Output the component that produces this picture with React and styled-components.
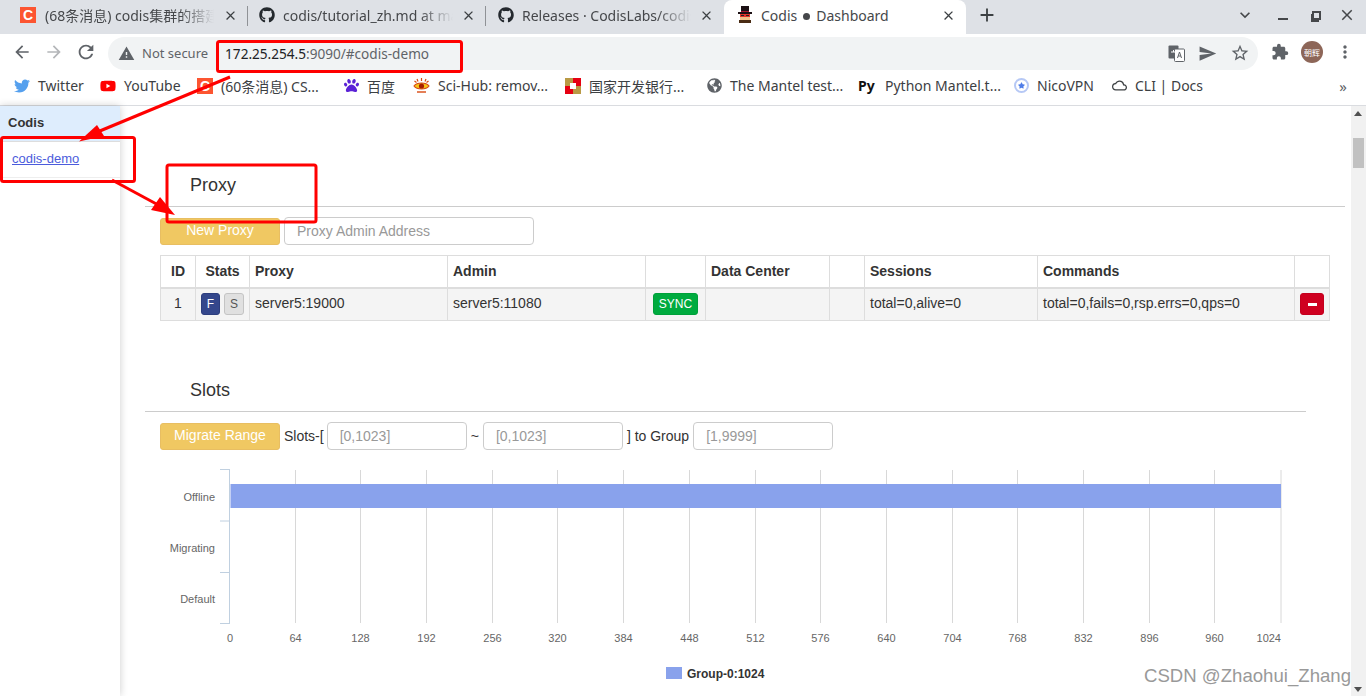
import React from "react";
import styled, { createGlobalStyle } from "styled-components";
import { FaGithub, FaTwitter, FaYoutube, FaPaw, FaGlobeAmericas, FaStar } from "react-icons/fa";
import {
  MdArrowBack,
  MdArrowForward,
  MdRefresh,
  MdWarning,
  MdSend,
  MdStarBorder,
  MdExtension,
  MdMoreVert,
  MdClose,
  MdAdd,
  MdKeyboardArrowDown,
  MdOutlineCloud
} from "react-icons/md";

const GlobalStyle = createGlobalStyle`
  html, body {
    margin: 0;
    padding: 0;
    height: 696px;
    overflow: hidden;
    background: #fff;
  }
  * {
    box-sizing: border-box;
  }
`;

const chromeFont = `"Noto Sans", "Noto Sans CJK SC", sans-serif`;
const pageFont = `"Liberation Sans", Arial, sans-serif`;

const Screen = styled.div`
  position: relative;
  width: 1366px;
  height: 696px;
  overflow: hidden;
  font-family: ${pageFont};
`;

const TabStrip = styled.div`
  display: flex;
  align-items: stretch;
  height: 34px;
  padding-left: 8px;
  background: #dee1e6;
  font-family: ${chromeFont};
`;

const Tab = styled.div`
  display: flex;
  align-items: center;
  width: ${p => p.$width}px;
  padding: 0 10px 4px ${p => p.$pad || 12}px;
  gap: ${p => p.$gap || 9}px;
  font-size: 14px;
  color: #45474a;
  position: relative;
  ${p =>
    p.$active
      ? `
    background: #fff;
    border-radius: 8px 8px 0 0;
    padding-left: 14px;
  `
      : p.$sep
      ? `
    &::after {
      content: "";
      position: absolute;
      right: 0;
      top: 6px;
      height: 20px;
      width: 1px;
      background: #8f9296;
    }
  `
      : ""}
`;

const TabTitle = styled.span`
  flex: 1;
  white-space: nowrap;
  overflow: hidden;
  mask-image: ${p =>
    p.$fade ? "linear-gradient(to right, #000 80%, transparent 100%)" : "none"};
`;

const TitleDot = styled.span`
  display: inline-block;
  width: 7px;
  height: 7px;
  margin: 0 6px 1px 6px;
  border-radius: 50%;
  background: #45474a;
`;

const TabClose = styled(MdClose)`
  flex: none;
  width: 15px;
  height: 15px;
  color: #3c4043;
`;

const CsdnIcon = styled.span`
  flex: none;
  display: flex;
  align-items: center;
  justify-content: center;
  width: 16px;
  height: 16px;
  background: #fc5531;
  color: #fff;
  font: 700 14px ${pageFont};
`;

const TabPlus = styled.div`
  display: flex;
  align-items: center;
  margin-left: 10px;
  padding-bottom: 4px;
  color: #3c4043;
`;

const WindowButtons = styled.div`
  display: flex;
  align-items: center;
  margin-left: auto;
  padding-bottom: 4px;
  color: #45474a;
`;

const WindowButton = styled.span`
  display: flex;
  justify-content: center;
  align-items: center;
  width: ${p => p.$width}px;
`;

const MinimizeMark = styled.span`
  width: 10px;
  height: 2px;
  margin-top: 8px;
  background: #45474a;
`;

const RestoreMark = styled.span`
  position: relative;
  width: 9px;
  height: 9px;
  border: 2px solid #45474a;
  &::after {
    content: "";
    position: absolute;
    left: -3px;
    top: 1px;
    width: 6px;
    height: 6px;
    border-left: 2px solid #45474a;
    border-bottom: 2px solid #45474a;
  }
`;

const Toolbar = styled.div`
  display: flex;
  align-items: center;
  height: 36px;
  padding-left: 6px;
  background: #fff;
  font-family: ${chromeFont};
  color: #5f6368;
`;

const NavButton = styled.span`
  display: flex;
  justify-content: center;
  width: 32px;
  color: ${p => (p.$off ? "#b4b6b9" : "#5f6368")};
`;

const Omnibox = styled.div`
  display: flex;
  align-items: center;
  width: 1150px;
  height: 33px;
  margin: 2px 0 0 6px;
  padding: 0 8px 0 10px;
  background: #f1f3f4;
  border-radius: 17px;
  font-size: 13.6px;
`;

const NotSecure = styled.span`
  margin: 0 17px 0 7px;
  font-size: 13px;
  color: #5f6368;
`;

const UrlHost = styled.span`
  color: #202124;
`;

const UrlRest = styled.span`
  color: #5f6368;
`;

const OmniIcons = styled.div`
  display: flex;
  align-items: center;
  gap: 13px;
  margin-left: auto;
  color: #5f6368;
`;

const ToolbarRight = styled.div`
  display: flex;
  align-items: center;
  margin-left: 13px;
  color: #5f6368;
`;

const Avatar = styled.span`
  display: flex;
  align-items: center;
  justify-content: center;
  width: 22px;
  height: 22px;
  margin: 0 12px 0 12px;
  border-radius: 50%;
  background: #8d6658;
  color: #fff;
  font-size: 8px;
`;

const BookmarkBar = styled.div`
  display: flex;
  align-items: center;
  height: 36px;
  padding: 0 0 4px 14px;
  background: #fff;
  border-bottom: 1px solid #dadce0;
  font-family: ${chromeFont};
  font-size: 14px;
  color: #3c4043;
`;

const Bookmark = styled.div`
  display: flex;
  align-items: center;
  flex: none;
  width: ${p => p.$width}px;
  gap: 8px;
  white-space: nowrap;
`;

const BookmarkMore = styled.span`
  margin-left: auto;
  margin-right: 19px;
  font-size: 15px;
  color: #5f6368;
`;

const PyIcon = styled.span`
  width: 19px;
  font: 700 14px ${chromeFont};
  color: #111;
`;

const NicoIcon = styled.span`
  display: flex;
  align-items: center;
  justify-content: center;
  width: 15px;
  height: 15px;
  border-radius: 50%;
  border: 2px solid #b6c8f5;
  color: #4f7de8;
  font-size: 7px;
`;

const Body = styled.div`
  display: flex;
  height: 590px;
`;

const Sidebar = styled.aside`
  flex: none;
  width: 120px;
  background: #fff;
  box-shadow: 0 0 8px rgba(0, 0, 0, 0.2);
`;

const SidebarHead = styled.div`
  height: 35px;
  padding: 9px 8px 0;
  background: #deedfd;
  font-size: 13px;
  line-height: 15px;
  font-weight: 700;
  color: #333;
`;

const SidebarItem = styled.div`
  height: 37px;
  padding: 9px 12px 0;
  border-top: 1px solid #ddd;
  border-bottom: 1px solid #eee;
  font-size: 13px;
  line-height: 15px;
`;

const DemoLink = styled.a`
  color: #4b5cdc;
  text-decoration: underline;
`;

const Content = styled.main`
  flex: 1;
  min-width: 0;
  overflow: hidden;
  padding-top: ${p => p.$top || 0}px;
`;

const SectionTitle = styled.h4`
  margin: ${p => p.$top || 0}px 0 0 70px;
  padding: 0;
  font-size: 18px;
  line-height: 20px;
  font-weight: 400;
  color: #333;
`;

const Rule = styled.hr`
  margin: 11px ${p => p.$right}px 10px 25px;
  border: 0;
  border-top: 1px solid #ccc;
`;

const ControlRow = styled.div`
  display: flex;
  align-items: center;
  height: 28px;
  margin-left: 40px;
  gap: 4px;
  font-size: 14px;
  color: #333;
`;

const WarnButton = styled.button`
  width: 120px;
  height: 27px;
  padding: 0 0 2px;
  background: #f0c862;
  border: 1px solid #e8be62;
  border-radius: 3px;
  color: #fff;
  font: 14px ${pageFont};
`;

const TextBox = styled.input`
  width: ${p => p.$width}px;
  height: 28px;
  padding: 0 12px;
  border: 1px solid #ccc;
  border-radius: 4px;
  background: #fff;
  font: 14px ${pageFont};
  &::placeholder {
    color: #999;
    opacity: 1;
  }
`;

const Joiner = styled.span`
  margin-right: ${p => p.$right || 0}px;
  white-space: nowrap;
`;

const ProxyTable = styled.table`
  width: 1169px;
  margin: 10px 0 0 40px;
  table-layout: fixed;
  border-collapse: collapse;
  font-size: 14px;
  line-height: 20px;
  color: #333;
`;

const Th = styled.th`
  height: 32px;
  padding: 0 5px;
  border: 1px solid #ddd;
  border-bottom: 2px solid #ddd;
  font-weight: 700;
  text-align: ${p => (p.$center ? "center" : "left")};
`;

const Td = styled.td`
  height: 33px;
  padding: 0 5px ${p => (p.$lift ? 2 : 0)}px;
  border: 1px solid #ddd;
  background: #f4f4f4;
  white-space: nowrap;
  text-align: ${p => (p.$center ? "center" : "left")};
`;

const StatButtons = styled.div`
  display: flex;
  justify-content: center;
  gap: 4px;
`;

const MiniButton = styled.span`
  display: inline-flex;
  align-items: center;
  justify-content: center;
  vertical-align: middle;
  width: ${p => p.$width}px;
  height: 22px;
  border-radius: 3px;
  font-size: 12px;
  color: ${p => p.$color};
  background: ${p => p.$bg};
  border: 1px solid ${p => p.$line};
`;

const MinusMark = styled.span`
  width: 9px;
  height: 3px;
  background: #fff;
`;

const Chart = styled.svg`
  display: block;
  margin-top: 10px;
  font-family: ${pageFont};
`;

const ScrollTrack = styled.div`
  position: relative;
  flex: none;
  width: 15px;
  background: #f1f1f1;
`;

const ScrollThumb = styled.div`
  position: absolute;
  top: 32px;
  left: 2px;
  width: 11px;
  height: 30px;
  background: #c1c1c1;
`;

const ScrollArrow = styled.span`
  position: absolute;
  left: 3px;
  ${p => (p.$down ? "bottom: 4px;" : "top: 5px;")}
  border-left: 4.5px solid transparent;
  border-right: 4.5px solid transparent;
  ${p => (p.$down ? "border-top" : "border-bottom")}: 5px solid #505050;
`;

const Annotations = styled.svg`
  position: absolute;
  left: 0;
  top: 0;
  pointer-events: none;
`;

const Watermark = styled.div`
  position: absolute;
  right: 15px;
  bottom: 8px;
  font: 18.6px/24px ${pageFont};
  color: #999;
  text-shadow: 0 0 1px #fff;
  white-space: nowrap;
`;

const tabs = [
  { title: "(68条消息) codis集群的搭建", width: 240, pad: 12, gap: 9, icon: <CsdnIcon>C</CsdnIcon> },
  { title: "codis/tutorial_zh.md at master", width: 238, pad: 11, gap: 8, icon: <FaGithub size={16} color="#24292e" /> },
  { title: "Releases · CodisLabs/codis", width: 238, pad: 12, gap: 8, icon: <FaGithub size={16} color="#24292e" /> }
];

const CodisFavicon = () => (
  <svg width="14" height="18" viewBox="0 0 14 18">
    <rect x="3" y="0" width="8" height="5" fill="#1c1014" />
    <rect x="3" y="5" width="8" height="1" fill="#a0142c" />
    <rect x="0" y="6" width="14" height="2" fill="#1c1014" />
    <rect x="2" y="8" width="10" height="3" fill="#e0332a" />
    <rect x="3" y="9" width="3" height="1" fill="#222" />
    <rect x="8" y="9" width="3" height="1" fill="#222" />
    <rect x="2" y="11" width="10" height="3" fill="#f0c089" />
    <rect x="1" y="14" width="12" height="3" fill="#4a2c14" />
  </svg>
);

const TranslateIcon = () => (
  <svg width="17" height="17" viewBox="0 0 17 17">
    <rect x="0.5" y="0.5" width="10" height="13" rx="1" fill="#5f6368" />
    <rect x="6.5" y="4" width="10" height="12.5" rx="1" fill="#fff" stroke="#5f6368" />
    <path d="M3 7h5M5.5 5v2" stroke="#fff" strokeWidth="1" />
    <path d="M9.5 13l2-6 2 6M10.3 11h2.5" stroke="#5f6368" strokeWidth="1" fill="none" />
  </svg>
);

const SciHubIcon = () => (
  <svg width="17" height="16" viewBox="0 0 17 16">
    <path d="M1 8c3-4 12-4 15 0-3 4-12 4-15 0z" fill="#f5c518" stroke="#d9480f" strokeWidth="1.2" />
    <circle cx="8.5" cy="8" r="2.6" fill="#a61e00" />
    <path d="M8.5 0v3M4 1l1 2.5M13 1l-1 2.5M1.5 3l2 1.5M15.5 3l-2 1.5" stroke="#d9480f" strokeWidth="1.2" />
    <path d="M4 14h9" stroke="#d9480f" strokeWidth="1.4" />
  </svg>
);

const BankIcon = () => (
  <svg width="16" height="16" viewBox="0 0 16 16">
    <rect width="16" height="16" fill="#b99a45" />
    <rect x="8" width="8" height="8" fill="#e60012" />
    <rect y="8" width="8" height="8" fill="#e60012" />
    <rect x="5" y="5" width="6" height="6" fill="#fff" />
  </svg>
);

const gridXs = [230, 295.5, 360.5, 426.5, 492.5, 557.5, 623.5, 689.5, 755.5, 820.5, 886.5, 952.5, 1017.5, 1083.5, 1149.5, 1214.5, 1281];
const slotLabels = [0, 64, 128, 192, 256, 320, 384, 448, 512, 576, 640, 704, 768, 832, 896, 960, 1024];
const laneLabels = [
  { text: "Offline", y: 501 },
  { text: "Migrating", y: 552 },
  { text: "Default", y: 603 }
];
const laneTicks = [469.5, 521, 572.5, 623.5];

const SlotsChart = () => (
  <Chart width="1231" height="236" viewBox="120 460 1231 236">
    {gridXs.slice(1).map(x => (
      <line key={x} x1={x} x2={x} y1="470" y2="623" stroke="#d8d8d8" />
    ))}
    <line x1="229.5" x2="229.5" y1="469" y2="624" stroke="#c0d0e0" />
    {laneTicks.map(y => (
      <line key={y} x1="220" x2="230" y1={y} y2={y} stroke="#c0d0e0" />
    ))}
    <rect x="230.5" y="484" width="1050.5" height="24" fill="#89a2ec" />
    {laneLabels.map(l => (
      <text key={l.text} x="215" y={l.y} textAnchor="end" fontSize="11" fill="#666">
        {l.text}
      </text>
    ))}
    {slotLabels.map((n, i) => (
      <text
        key={n}
        x={n === 1024 ? 1281 : gridXs[i]}
        y="642"
        textAnchor={n === 1024 ? "end" : "middle"}
        fontSize="11"
        fill="#666"
      >
        {n}
      </text>
    ))}
    <rect x="666" y="667" width="16" height="12" fill="#89a2ec" />
    <text x="687" y="678" fontSize="12" fontWeight="700" fill="#333">
      Group-0:1024
    </text>
  </Chart>
);

const App = () => {
  return (
    <Screen>
      <GlobalStyle />
      <TabStrip>
        {tabs.map((t, i) => (
          <Tab key={t.title} $width={t.width} $pad={t.pad} $gap={t.gap} $sep={i < 2}>
            {t.icon}
            <TabTitle $fade>{t.title}</TabTitle>
            <TabClose />
          </Tab>
        ))}
        <Tab $width={242} $active>
          <CodisFavicon />
          <TabTitle>
            Codis
            <TitleDot />
            Dashboard
          </TabTitle>
          <TabClose />
        </Tab>
        <TabPlus>
          <MdAdd size={22} />
        </TabPlus>
        <WindowButtons>
          <WindowButton $width={34}>
            <MdKeyboardArrowDown size={20} />
          </WindowButton>
          <WindowButton $width={42}>
            <MinimizeMark />
          </WindowButton>
          <WindowButton $width={24}>
            <RestoreMark />
          </WindowButton>
          <WindowButton $width={38}>
            <MdClose size={18} />
          </WindowButton>
        </WindowButtons>
      </TabStrip>
      <Toolbar>
        <NavButton>
          <MdArrowBack size={20} />
        </NavButton>
        <NavButton $off>
          <MdArrowForward size={20} />
        </NavButton>
        <NavButton>
          <MdRefresh size={22} />
        </NavButton>
        <Omnibox>
          <MdWarning size={17} />
          <NotSecure>Not secure</NotSecure>
          <UrlHost>172.25.254.5</UrlHost>
          <UrlRest>:9090/#codis-demo</UrlRest>
          <OmniIcons>
            <TranslateIcon />
            <MdSend size={19} />
            <MdStarBorder size={20} />
          </OmniIcons>
        </Omnibox>
        <ToolbarRight>
          <MdExtension size={18} />
          <Avatar>朝辉</Avatar>
          <MdMoreVert size={20} />
        </ToolbarRight>
      </Toolbar>
      <BookmarkBar>
        <Bookmark $width={86}>
          <FaTwitter size={16} color="#55a0ee" />
          Twitter
        </Bookmark>
        <Bookmark $width={97}>
          <FaYoutube size={16} color="#f00" />
          YouTube
        </Bookmark>
        <Bookmark $width={147}>
          <CsdnIcon>C</CsdnIcon>
          (60条消息) CS...
        </Bookmark>
        <Bookmark $width={69}>
          <FaPaw size={15} color="#5a22d6" />
          百度
        </Bookmark>
        <Bookmark $width={152}>
          <SciHubIcon />
          Sci-Hub: remov...
        </Bookmark>
        <Bookmark $width={142}>
          <BankIcon />
          国家开发银行...
        </Bookmark>
        <Bookmark $width={151}>
          <FaGlobeAmericas size={15} color="#5f6368" />
          The Mantel test...
        </Bookmark>
        <Bookmark $width={156}>
          <PyIcon>Py</PyIcon>
          Python Mantel.t...
        </Bookmark>
        <Bookmark $width={98}>
          <NicoIcon>
            <FaStar />
          </NicoIcon>
          NicoVPN
        </Bookmark>
        <Bookmark $width={110}>
          <MdOutlineCloud size={15} color="#3c4043" />
          CLI | Docs
        </Bookmark>
        <BookmarkMore>»</BookmarkMore>
      </BookmarkBar>
      <Body>
        <Sidebar>
          <SidebarHead>Codis</SidebarHead>
          <SidebarItem>
            <DemoLink href="#codis-demo">codis-demo</DemoLink>
          </SidebarItem>
        </Sidebar>
        <Content $top={69}>
          <SectionTitle>Proxy</SectionTitle>
          <Rule $right={6} />
          <ControlRow>
            <WarnButton>New Proxy</WarnButton>
            <TextBox $width={250} placeholder="Proxy Admin Address" />
          </ControlRow>
          <ProxyTable>
            <colgroup>
              <col width="35" />
              <col width="54" />
              <col width="198" />
              <col width="198" />
              <col width="60" />
              <col width="124" />
              <col width="35" />
              <col width="173" />
              <col width="257" />
              <col width="35" />
            </colgroup>
            <thead>
              <tr>
                <Th $center>ID</Th>
                <Th $center>Stats</Th>
                <Th>Proxy</Th>
                <Th>Admin</Th>
                <Th />
                <Th>Data Center</Th>
                <Th />
                <Th>Sessions</Th>
                <Th>Commands</Th>
                <Th />
              </tr>
            </thead>
            <tbody>
              <tr>
                <Td $center $lift>
                  1
                </Td>
                <Td $center>
                  <StatButtons>
                    <MiniButton $width={19} $bg="#34478c" $line="#2d3e7e" $color="#fff">
                      F
                    </MiniButton>
                    <MiniButton $width={20} $bg="#e0e0e0" $line="#c4c4c4" $color="#555">
                      S
                    </MiniButton>
                  </StatButtons>
                </Td>
                <Td $lift>server5:19000</Td>
                <Td $lift>server5:11080</Td>
                <Td $center>
                  <MiniButton $width={45} $bg="#00ab3f" $line="#00a03a" $color="#fff">
                    SYNC
                  </MiniButton>
                </Td>
                <Td />
                <Td />
                <Td $lift>total=0,alive=0</Td>
                <Td $lift>total=0,fails=0,rsp.errs=0,qps=0</Td>
                <Td $center>
                  <MiniButton $width={24} $bg="#cf0020" $line="#c4001e" $color="#fff">
                    <MinusMark />
                  </MiniButton>
                </Td>
              </tr>
            </tbody>
          </ProxyTable>
          <SectionTitle $top={59}>Slots</SectionTitle>
          <Rule $right={45} />
          <ControlRow>
            <WarnButton>Migrate Range</WarnButton>
            <Joiner $right={-1}>Slots-[</Joiner>
            <TextBox $width={140} placeholder="[0,1023]" />
            <Joiner>~</Joiner>
            <TextBox $width={140} placeholder="[0,1023]" />
            <Joiner>] to Group</Joiner>
            <TextBox $width={140} placeholder="[1,9999]" />
          </ControlRow>
          <SlotsChart />
        </Content>
        <ScrollTrack>
          <ScrollArrow />
          <ScrollThumb />
          <ScrollArrow $down />
        </ScrollTrack>
      </Body>
      <Annotations width="1366" height="696" viewBox="0 0 1366 696">
        <g fill="none" stroke="#f00" strokeWidth="3">
          <rect x="217.5" y="41.5" width="244" height="30" rx="2" />
          <rect x="1.5" y="137.5" width="133" height="44" rx="2" />
          <rect x="167" y="165" width="149" height="57" rx="2" />
          <line x1="230" y1="77" x2="95" y2="133" />
          <line x1="112" y1="180" x2="162" y2="207" />
        </g>
        <polygon points="79,141.5 97,125 104,136" fill="#f00" />
        <polygon points="175,215 151,210 160,197" fill="#f00" />
      </Annotations>
      <Watermark>CSDN @Zhaohui_Zhang</Watermark>
    </Screen>
  );
};

export default App;
